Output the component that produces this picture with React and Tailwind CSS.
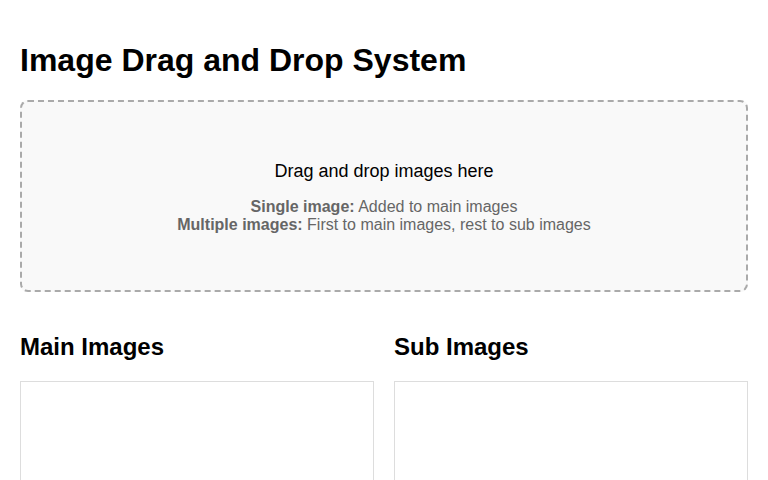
import React from 'react';

const App = () => {
    return (
        <div className="min-h-screen bg-white p-5 text-black" style={{ fontFamily: '"Liberation Sans", Arial, sans-serif' }}>
            <h1 className="my-[21.5px] text-[32px] font-bold leading-[37px]">Image Drag and Drop System</h1>

            <div className="rounded-lg border-2 border-dashed border-[#aaaaaa] bg-[#f9f9f9] px-10 py-10 text-center">
                <p className="mt-[19px] mb-4 text-lg leading-[21px]">Drag and drop images here</p>
                <p className="my-4 text-base leading-[18px] text-[#666666]">
                    <strong>Single image:</strong> Added to main images
                    <br />
                    <strong>Multiple images:</strong> First to main images, rest to sub images
                </p>
            </div>

            <div className="mt-5 grid grid-cols-2 gap-5">
                <div>
                    <h2 className="mt-[21px] mb-5 text-2xl font-bold leading-7">Main Images</h2>
                    <div className="min-h-[200px] border border-[#dddddd] p-2.5"></div>
                </div>
                <div>
                    <h2 className="mt-[21px] mb-5 text-2xl font-bold leading-7">Sub Images</h2>
                    <div className="min-h-[200px] border border-[#dddddd] p-2.5"></div>
                </div>
            </div>
        </div>
    );
};

export default App;
